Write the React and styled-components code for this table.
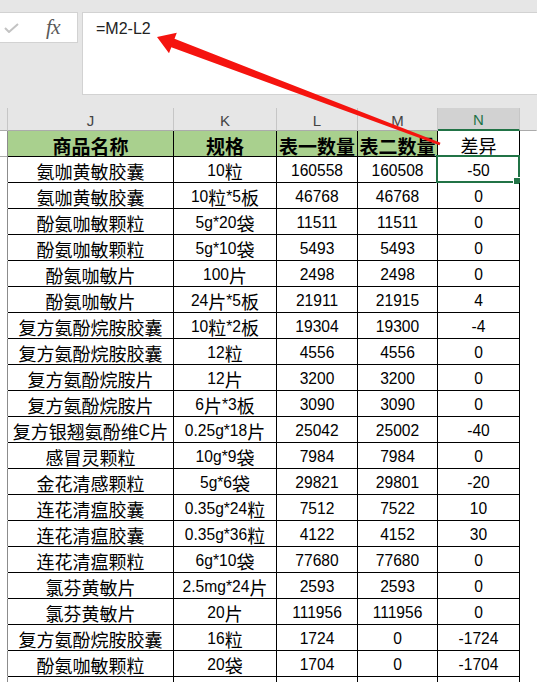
import React from 'react';
import styled, { createGlobalStyle, css } from 'styled-components';

const GlobalStyle = createGlobalStyle`
  html, body {
    margin: 0;
    padding: 0;
    background: #ffffff;
  }
  * {
    box-sizing: border-box;
  }
`;

const green = '#217346';

const Screen = styled.div`
  position: relative;
  width: 537px;
  height: 682px;
  overflow: hidden;
  background: #ffffff;
  font-family: "Noto Sans CJK SC", sans-serif;
  color: #000;
`;

// formula bar
const FormulaBar = styled.div`
  display: flex;
  align-items: flex-start;
  gap: 4px;
  height: 108px;
  padding-top: 12px;
  background: #e6e6e6;
`;

const EditButtons = styled.div`
  display: flex;
  align-items: center;
  width: 78px;
  height: 31px;
  padding-left: 3px;
  background: #ffffff;
  border: 1px solid #d2d2d2;
  border-left: none;
`;

const Check = styled.span`
  width: 16px;
  display: flex;
  justify-content: center;
`;

const Fx = styled.span`
  margin-left: 27px;
  font-family: "Liberation Serif", serif;
  font-style: italic;
  font-size: 21px;
  color: #5a5a5a;
  letter-spacing: -0.5px;
`;

const FormulaInput = styled.div`
  flex: 1;
  height: 83px;
  padding: 7px 0 0 13px;
  background: #ffffff;
  border: 1px solid #d2d2d2;
  border-right: none;
  font-family: "Liberation Sans", sans-serif;
  font-size: 16px;
  color: #222;
`;

// sheet grid
const Sheet = styled.div`
  display: grid;
  grid-template-columns: 8px 166px 103px 81px 80px 82px 1fr;
  grid-template-rows: 23px;
  grid-auto-rows: 26px;
`;

const ColHead = styled.div`
  display: flex;
  align-items: center;
  justify-content: center;
  padding-top: 2px;
  background: #e6e6e6;
  border-right: 1px solid ${p => (p.$edge ? 'transparent' : '#c6c6c6')};
  border-bottom: 1px solid #ababab;
  font-family: "Liberation Sans", sans-serif;
  font-size: 15px;
  color: #444;
  ${p =>
    p.$active &&
    css`
      background: #d2d2d2;
      color: ${green};
      border-bottom: 2px solid ${green};
    `}
`;

const Stub = styled.div`
  background: #ffffff;
  border-right: 1px solid #8c8c8c;
  border-bottom: 1px solid ${p => (p.$head ? '#ababab' : 'transparent')};
`;

const cellBase = css`
  display: flex;
  align-items: center;
  justify-content: center;
  padding-top: 3px;
  white-space: nowrap;
  border-right: 1px solid #000;
  border-bottom: 1px solid #000;
`;

const HeadCell = styled.div`
  ${cellBase}
  background: ${p => (p.$plain ? '#ffffff' : '#a9d08e')};
  font-size: ${p => (p.$plain ? '18px' : '19px')};
  font-weight: ${p => (p.$plain ? 400 : 700)};
`;

const Cell = styled.div`
  ${cellBase}
  position: relative;
  font-size: 18px;
  ${p =>
    p.$selected &&
    css`
      &::before {
        content: '';
        position: absolute;
        left: -2px;
        top: -2px;
        right: -1px;
        bottom: -1px;
        border: 2px solid ${green};
      }
      &::after {
        content: '';
        position: absolute;
        right: -2px;
        bottom: -3px;
        width: 6px;
        height: 6px;
        background: ${green};
        border: 1px solid #ffffff;
      }
    `}
`;

const Blank = styled.div`
  background: #ffffff;
`;

const Latin = styled.span`
  font-family: "Liberation Sans", sans-serif;
  font-size: 15.6px;
`;

const Arrow = styled.svg`
  position: absolute;
  left: 0;
  top: 0;
  pointer-events: none;
`;

const rows = [
  ['氨咖黄敏胶囊', '10粒', 160558, 160508, -50],
  ['氨咖黄敏胶囊', '10粒*5板', 46768, 46768, 0],
  ['酚氨咖敏颗粒', '5g*20袋', 11511, 11511, 0],
  ['酚氨咖敏颗粒', '5g*10袋', 5493, 5493, 0],
  ['酚氨咖敏片', '100片', 2498, 2498, 0],
  ['酚氨咖敏片', '24片*5板', 21911, 21915, 4],
  ['复方氨酚烷胺胶囊', '10粒*2板', 19304, 19300, -4],
  ['复方氨酚烷胺胶囊', '12粒', 4556, 4556, 0],
  ['复方氨酚烷胺片', '12片', 3200, 3200, 0],
  ['复方氨酚烷胺片', '6片*3板', 3090, 3090, 0],
  ['复方银翘氨酚维C片', '0.25g*18片', 25042, 25002, -40],
  ['感冒灵颗粒', '10g*9袋', 7984, 7984, 0],
  ['金花清感颗粒', '5g*6袋', 29821, 29801, -20],
  ['连花清瘟胶囊', '0.35g*24粒', 7512, 7522, 10],
  ['连花清瘟胶囊', '0.35g*36粒', 4122, 4152, 30],
  ['连花清瘟颗粒', '6g*10袋', 77680, 77680, 0],
  ['氯芬黄敏片', '2.5mg*24片', 2593, 2593, 0],
  ['氯芬黄敏片', '20片', 111956, 111956, 0],
  ['复方氨酚烷胺胶囊', '16粒', 1724, 0, -1724],
  ['酚氨咖敏颗粒', '20袋', 1704, 0, -1704],
  ['', '', '', '', ''],
];

// CJK runs keep the cell font, digits and latin get a narrower face
const mixed = text =>
  String(text)
    .split(/([\u4e00-\u9fff]+)/)
    .filter(Boolean)
    .map((part, i) =>
      /[\u4e00-\u9fff]/.test(part) ? <span key={i}>{part}</span> : <Latin key={i}>{part}</Latin>
    );

const CheckIcon = () => (
  <svg width="15" height="10" viewBox="0 0 15 10">
    <path d="M1 5 L5 9 L14 1" fill="none" stroke="#c3c3c3" strokeWidth="2" />
  </svg>
);

const App = () => {
  return (
    <Screen>
      <GlobalStyle />
      <FormulaBar>
        <EditButtons>
          <Check>
            <CheckIcon />
          </Check>
          <Fx>fx</Fx>
        </EditButtons>
        <FormulaInput>=M2-L2</FormulaInput>
      </FormulaBar>

      <Sheet>
        <ColHead />
        {['J', 'K', 'L', 'M'].map(l => (
          <ColHead key={l}>{l}</ColHead>
        ))}
        <ColHead $active>N</ColHead>
        <ColHead $edge />

        <Stub $head />
        <HeadCell>商品名称</HeadCell>
        <HeadCell>规格</HeadCell>
        <HeadCell>表一数量</HeadCell>
        <HeadCell>表二数量</HeadCell>
        <HeadCell $plain>差异</HeadCell>
        <Blank />

        {rows.map((r, i) => (
          <React.Fragment key={i}>
            <Stub />
            <Cell>{mixed(r[0])}</Cell>
            <Cell>{mixed(r[1])}</Cell>
            <Cell>{mixed(r[2])}</Cell>
            <Cell>{mixed(r[3])}</Cell>
            <Cell $selected={i === 0}>{mixed(r[4])}</Cell>
            <Blank />
          </React.Fragment>
        ))}
      </Sheet>

      <Arrow width="537" height="682" viewBox="0 0 537 682">
        <polygon
          points="157,37 176.8,32.7 174.5,38.8 440.5,142.8 439.5,145.2 171.3,47.2 169,53.3"
          fill="#f5140f"
        />
      </Arrow>
    </Screen>
  );
};

export default App;
